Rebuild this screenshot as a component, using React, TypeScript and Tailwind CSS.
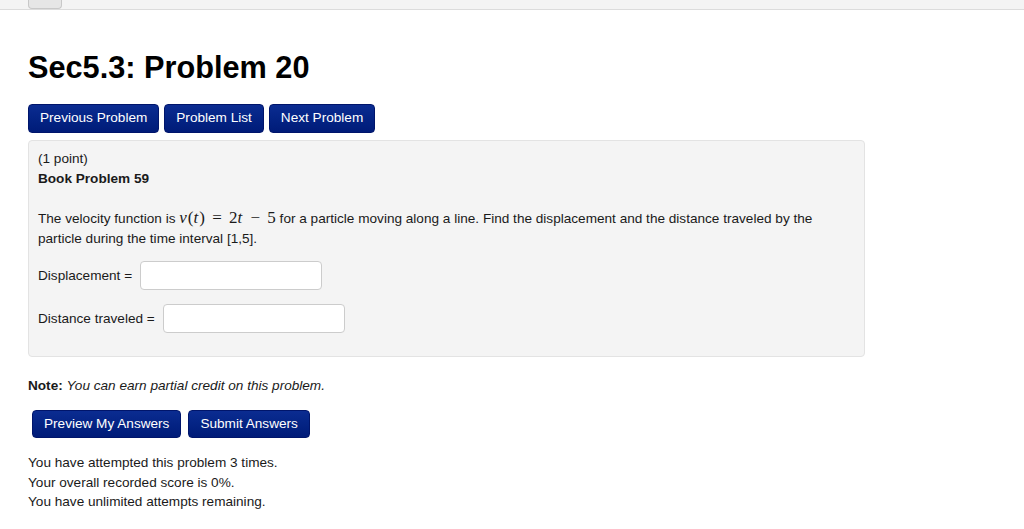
const navBtn =
  "rounded-[4px] border border-[#00156b] bg-gradient-to-b from-[#0b2c91] to-[#001b78] px-[11px] text-[13.6px] text-white";

function MathExpr() {
  return (
    <span className="inline-block font-['Liberation_Serif',serif] text-[17px] leading-[16px]">
      <i className="pr-[1px]">v</i>(<i className="pr-[1px]">t</i>) <span className="mx-[3px]">=</span> 2<i className="pr-[1px]">t</i> <span className="mx-[3px]">−</span> 5
    </span>
  );
}

export default function App() {
  return (
    <div className="min-h-[529px] bg-white font-['Liberation_Sans',Arial,sans-serif] text-[#1a1a1a]">
      <div className="h-[10px] border-b border-[#dcdcdc] bg-[#f4f4f4]">
        <div className="ml-[28px] h-[9px] w-[34px] rounded-b-[4px] border border-t-0 border-[#c8c8c8] bg-[#e6e6e6]" />
      </div>

      <div className="px-[28px]">
        <h1 className="mt-[40px] text-[30.7px] font-bold leading-[36px] text-black">Sec5.3: Problem 20</h1>

        <div className="mt-[18px] flex gap-[5px]">
          <button className={`${navBtn} h-[29px]`}>Previous Problem</button>
          <button className={`${navBtn} h-[29px]`}>Problem List</button>
          <button className={`${navBtn} h-[29px]`}>Next Problem</button>
        </div>

        <div className="mt-[7px] w-[837px] rounded-[4px] border border-[#e3e3e3] bg-[#f4f4f4] px-[9px] pb-[23px] pt-[8px] text-[13.6px] leading-[20px]">
          <div>(1 point)</div>
          <div className="font-bold">Book Problem 59</div>
          <p className="mt-[20px]">
            The velocity function is <MathExpr /> for a particle moving along a line. Find the displacement and the distance traveled by the particle during the time interval [1,5].
          </p>
          <div className="mt-[12px] flex items-center gap-[8px]">
            <span>Displacement =</span>
            <input className="h-[29px] w-[182px] rounded-[4px] border border-[#cccccc] bg-white" />
          </div>
          <div className="mt-[14px] flex items-center gap-[8px]">
            <span>Distance traveled =</span>
            <input className="h-[29px] w-[182px] rounded-[4px] border border-[#cccccc] bg-white" />
          </div>
        </div>

        <p className="mt-[19px] text-[13.6px] leading-[20px]">
          <span className="font-bold">Note:</span> <i>You can earn partial credit on this problem.</i>
        </p>

        <div className="ml-[4px] mt-[14px] flex gap-[7px]">
          <button className={`${navBtn} h-[28px]`}>Preview My Answers</button>
          <button className={`${navBtn} h-[28px]`}>Submit Answers</button>
        </div>

        <div className="mt-[15px] text-[13.6px] leading-[19.5px]">
          <div>You have attempted this problem 3 times.</div>
          <div>Your overall recorded score is 0%.</div>
          <div>You have unlimited attempts remaining.</div>
        </div>
      </div>
    </div>
  );
}
